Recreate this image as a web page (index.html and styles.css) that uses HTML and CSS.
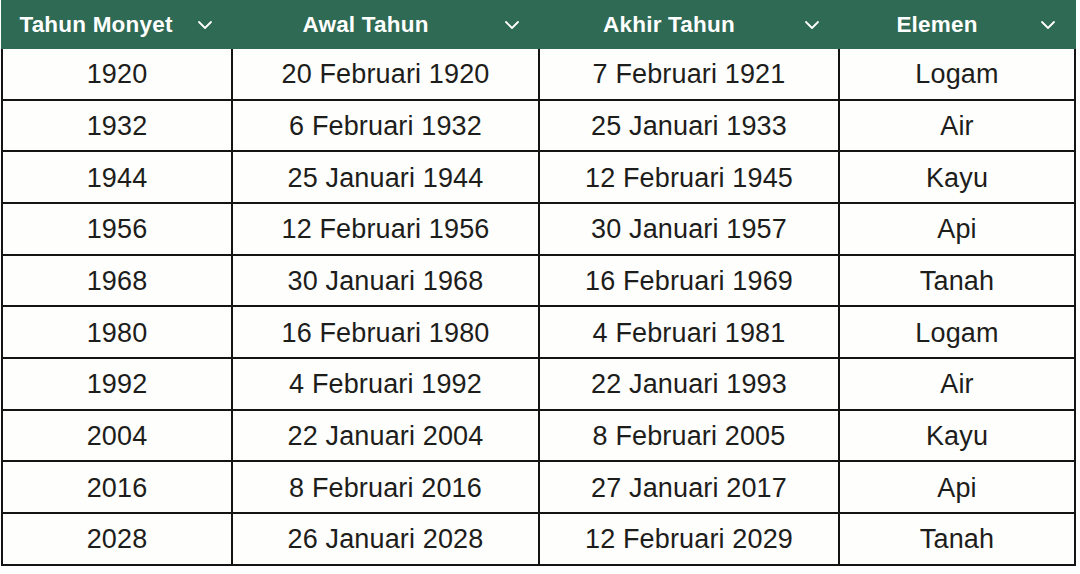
FILE: index.html
```html
<!DOCTYPE html>
<html lang="id">
<head>
<meta charset="utf-8">
<title>Tahun Monyet</title>
<link rel="stylesheet" href="styles.css">
</head>
<body>
<table class="grid">
  <colgroup>
    <col class="c1"><col class="c2"><col class="c3"><col class="c4">
  </colgroup>
  <thead>
    <tr>
      <th><div class="hcell"><span class="label">Tahun Monyet</span><svg class="chev" viewBox="0 0 16 10"><path d="M2 2 L8 8 L14 2"/></svg></div></th>
      <th><div class="hcell"><span class="label">Awal Tahun</span><svg class="chev" viewBox="0 0 16 10"><path d="M2 2 L8 8 L14 2"/></svg></div></th>
      <th><div class="hcell"><span class="label">Akhir Tahun</span><svg class="chev" viewBox="0 0 16 10"><path d="M2 2 L8 8 L14 2"/></svg></div></th>
      <th><div class="hcell"><span class="label">Elemen</span><svg class="chev" viewBox="0 0 16 10"><path d="M2 2 L8 8 L14 2"/></svg></div></th>
    </tr>
  </thead>
  <tbody>
    <tr><td>1920</td><td>20 Februari 1920</td><td>7 Februari 1921</td><td>Logam</td></tr>
    <tr><td>1932</td><td>6 Februari 1932</td><td>25 Januari 1933</td><td>Air</td></tr>
    <tr><td>1944</td><td>25 Januari 1944</td><td>12 Februari 1945</td><td>Kayu</td></tr>
    <tr><td>1956</td><td>12 Februari 1956</td><td>30 Januari 1957</td><td>Api</td></tr>
    <tr><td>1968</td><td>30 Januari 1968</td><td>16 Februari 1969</td><td>Tanah</td></tr>
    <tr><td>1980</td><td>16 Februari 1980</td><td>4 Februari 1981</td><td>Logam</td></tr>
    <tr><td>1992</td><td>4 Februari 1992</td><td>22 Januari 1993</td><td>Air</td></tr>
    <tr><td>2004</td><td>22 Januari 2004</td><td>8 Februari 2005</td><td>Kayu</td></tr>
    <tr><td>2016</td><td>8 Februari 2016</td><td>27 Januari 2017</td><td>Api</td></tr>
    <tr><td>2028</td><td>26 Januari 2028</td><td>12 Februari 2029</td><td>Tanah</td></tr>
  </tbody>
</table>
</body>
</html>
```
FILE: styles.css
```css
html, body {
  margin: 0;
  padding: 0;
  background: #ffffff;
}

body {
  font-family: "Liberation Sans", Arial, Helvetica, sans-serif;
  color: #1d1d1b;
}

.grid {
  margin: 0 0 0 1px;
  width: 1075px;
  table-layout: fixed;
  border-collapse: separate;
  border-spacing: 0;
}

.c1 { width: 232px; }
.c2 { width: 307px; }
.c3 { width: 300px; }
.c4 { width: 236px; }

.grid th {
  background: #2f6a54;
  color: #ffffff;
  height: 49px;
  padding: 0 20px 0 0;
  box-sizing: border-box;
  font-size: 22.5px;
  letter-spacing: 0.2px;
  font-weight: bold;
}

.hcell {
  display: flex;
  align-items: center;
}

.label {
  flex: 1;
  text-align: center;
  white-space: nowrap;
}

.chev {
  width: 16px;
  height: 10px;
  margin-left: 6px;
  flex: none;
  fill: none;
  stroke: #ffffff;
  stroke-width: 1.8;
  stroke-linecap: round;
  stroke-linejoin: round;
}

.grid td {
  box-sizing: border-box;
  height: 51.67px;
  padding: 2px 0 0 0;
  text-align: center;
  font-size: 27px;
  letter-spacing: 0.15px;
  background: #fefefc;
  border-right: 2px solid #141414;
  border-bottom: 2px solid #141414;
  white-space: nowrap;
}

.grid td:first-child {
  border-left: 2px solid #141414;
}
```
